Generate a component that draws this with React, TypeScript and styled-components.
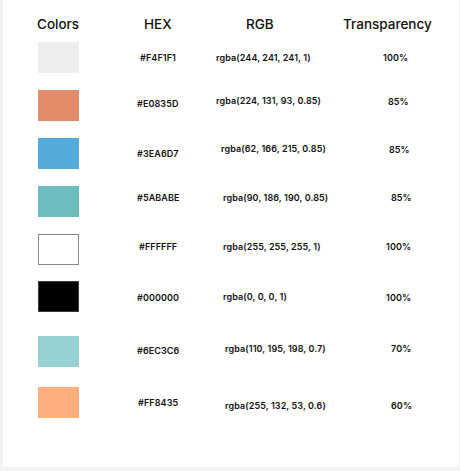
import styled, { createGlobalStyle } from "styled-components";

const GlobalStyle = createGlobalStyle`
    html, body {
        margin: 0;
        padding: 0;
        background: #f3f3f3;
    }
    body {
        font-family: Inter, "Noto Sans", sans-serif;
        color: #111;
    }
`

type Swatch = {
    fill: string
    border?: string
    hex: string
    rgba: string
    pct: string
    height: number
    // left offsets / vertical centres, taken from the design
    hexX: number
    hexY: number
    rgbX: number
    rgbY: number
    pctX: number
    pctY: number
}

const swatches: Swatch[] = [
    { fill: "#efeeed", hex: "#F4F1F1", rgba: "rgba(244, 241, 241, 1)", pct: "100%", height: 48, hexX: 20, hexY: 15.5, rgbX: 16, rgbY: 15.7, pctX: 43, pctY: 15.7 },
    { fill: "#e38c6c", hex: "#E0835D", rgba: "rgba(224, 131, 93, 0.85)", pct: "85%", height: 48, hexX: 17, hexY: 14, rgbX: 16, rgbY: 11, pctX: 48, pctY: 11.7 },
    { fill: "#54abdb", hex: "#3EA6D7", rgba: "rgba(62, 166, 215, 0.85)", pct: "85%", height: 48, hexX: 17, hexY: 16.3, rgbX: 21, rgbY: 11.3, pctX: 49, pctY: 11.7 },
    { fill: "#6bbdc0", hex: "#5ABABE", rgba: "rgba(90, 186, 190, 0.85)", pct: "85%", height: 48, hexX: 17, hexY: 12, rgbX: 23, rgbY: 12, pctX: 51, pctY: 12 },
    { fill: "#ffffff", border: "#8a8a8a", hex: "#FFFFFF", rgba: "rgba(255, 255, 255, 1)", pct: "100%", height: 47, hexX: 19, hexY: 13.3, rgbX: 23, rgbY: 12.7, pctX: 46, pctY: 13.3 },
    { fill: "#000000", border: "#3a3a3a", hex: "#000000", rgba: "rgba(0, 0, 0, 1)", pct: "100%", height: 55, hexX: 17, hexY: 17, rgbX: 23, rgbY: 16, pctX: 46, pctY: 16.7 },
    { fill: "#97d1d4", hex: "#6EC3C6", rgba: "rgba(110, 195, 198, 0.7)", pct: "70%", height: 51, hexX: 17, hexY: 15, rgbX: 25, rgbY: 12.7, pctX: 51, pctY: 13 },
    { fill: "#ffae7c", hex: "#FF8435", rgba: "rgba(255, 132, 53, 0.6)", pct: "60%", height: 49, hexX: 18, hexY: 16.3, rgbX: 25, rgbY: 19.3, pctX: 51, pctY: 19 },
]

const Card = styled.div`
    margin-left: 3px;
    width: 456px;
    height: 467px;
    background: #fff;
    box-sizing: border-box;
    padding-top: 14px;
`

const Columns = styled.div<{ $height: number }>`
    display: grid;
    grid-template-columns: 117px 80px 140px 119px;
    height: ${p => p.$height}px;
`

const Header = styled(Columns)`
    margin-bottom: 8px;
`

const HeadCell = styled.div<{ $x: number }>`
    padding-left: ${p => p.$x}px;
    font-size: 13.5px;
    font-weight: 500;
    line-height: 20px;
    color: #111;
    white-space: nowrap;
`

const ColorBox = styled.div<{ $fill: string; $border?: string }>`
    margin-left: 35px;
    width: 41px;
    height: 31px;
    box-sizing: border-box;
    background: ${p => p.$fill};
    border: 1px solid ${p => p.$border ?? "transparent"};
`

const Value = styled.div<{ $x: number; $y: number }>`
    align-self: start;
    padding-left: ${p => p.$x}px;
    margin-top: ${p => p.$y - 6}px;
    font-size: 9px;
    font-weight: 600;
    line-height: 12px;
    letter-spacing: 0.1px;
    color: #111;
    white-space: nowrap;
`

export default function App() {
    return (
        <>
            <GlobalStyle />
            <Card>
                <Header $height={20}>
                    <HeadCell $x={34}>Colors</HeadCell>
                    <HeadCell $x={24}>HEX</HeadCell>
                    <HeadCell $x={46}>RGB</HeadCell>
                    <HeadCell $x={3}>Transparency</HeadCell>
                </Header>
                {swatches.map(s => (
                    <Columns key={s.hex} $height={s.height}>
                        <ColorBox $fill={s.fill} $border={s.border} />
                        <Value $x={s.hexX} $y={s.hexY}>{s.hex}</Value>
                        <Value $x={s.rgbX} $y={s.rgbY}>{s.rgba}</Value>
                        <Value $x={s.pctX} $y={s.pctY}>{s.pct}</Value>
                    </Columns>
                ))}
            </Card>
        </>
    )
}
